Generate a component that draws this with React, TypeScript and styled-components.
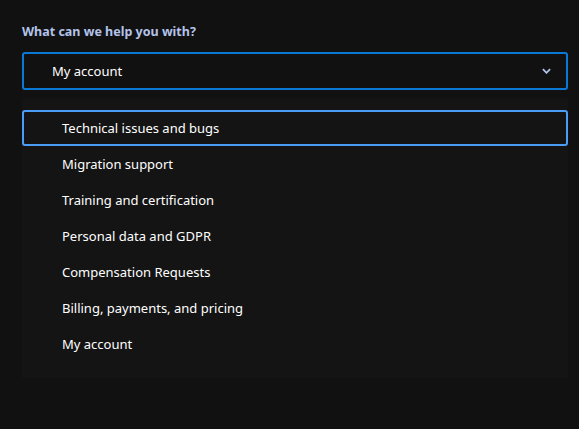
import React, { useState } from "react";
import styled, { createGlobalStyle } from "styled-components";

const GlobalStyle = createGlobalStyle`
  html, body {
    margin: 0;
    padding: 0;
    background: #111111;
  }
  body {
    font-family: "Noto Sans", "Open Sans", sans-serif;
    color: #ffffff;
  }
`;

const options = [
  "Technical issues and bugs",
  "Migration support",
  "Training and certification",
  "Personal data and GDPR",
  "Compensation Requests",
  "Billing, payments, and pricing",
  "My account",
];

const App = () => {
  const [selected] = useState("My account");
  const [focused] = useState(0);

  return (
    <>
      <GlobalStyle />
      <S.Page>
        <S.Label>What can we help you with?</S.Label>
        <S.Select>
          <S.SelectValue>{selected}</S.SelectValue>
          <S.Chevron viewBox="0 0 10 6" aria-hidden>
            <path d="M1 1 L5 5 L9 1" fill="none" stroke="currentColor" strokeWidth="2" />
          </S.Chevron>
        </S.Select>
        <S.Listbox>
          {options.map((o, i) => (
            <S.Option key={o} $focused={i === focused}>
              {o}
            </S.Option>
          ))}
        </S.Listbox>
      </S.Page>
    </>
  );
};

export default App;

const S = {
  Page: styled.div`
    width: 546px;
    padding: 23px 0 0 22px;
    display: flex;
    flex-direction: column;
  `,
  Label: styled.div`
    font-size: 12.5px;
    font-weight: 700;
    color: #b3c3ea;
    line-height: 18px;
    margin-bottom: 11px;
  `,
  Select: styled.div`
    height: 38px;
    box-sizing: border-box;
    border: 2px solid #0a78d6;
    border-radius: 3px;
    display: flex;
    align-items: center;
    justify-content: space-between;
    padding: 0 15px 0 28px;
  `,
  SelectValue: styled.span`
    font-size: 13px;
  `,
  Chevron: styled.svg`
    width: 9px;
    height: 6px;
    color: #b3c3ea;
  `,
  Listbox: styled.div`
    margin-top: 8px;
    background: #141414;
    padding: 12px 0 16px;
    display: flex;
    flex-direction: column;
    box-shadow: 0 0 1px rgba(255, 255, 255, 0.04);
  `,
  Option: styled.div<{ $focused: boolean }>`
    height: 36px;
    box-sizing: border-box;
    display: flex;
    align-items: center;
    padding-left: 38px;
    font-size: 13px;
    color: #ffffff;
    border: 2px solid ${(p) => (p.$focused ? "#4b9cf5" : "transparent")};
    border-radius: 3px;
  `,
};
